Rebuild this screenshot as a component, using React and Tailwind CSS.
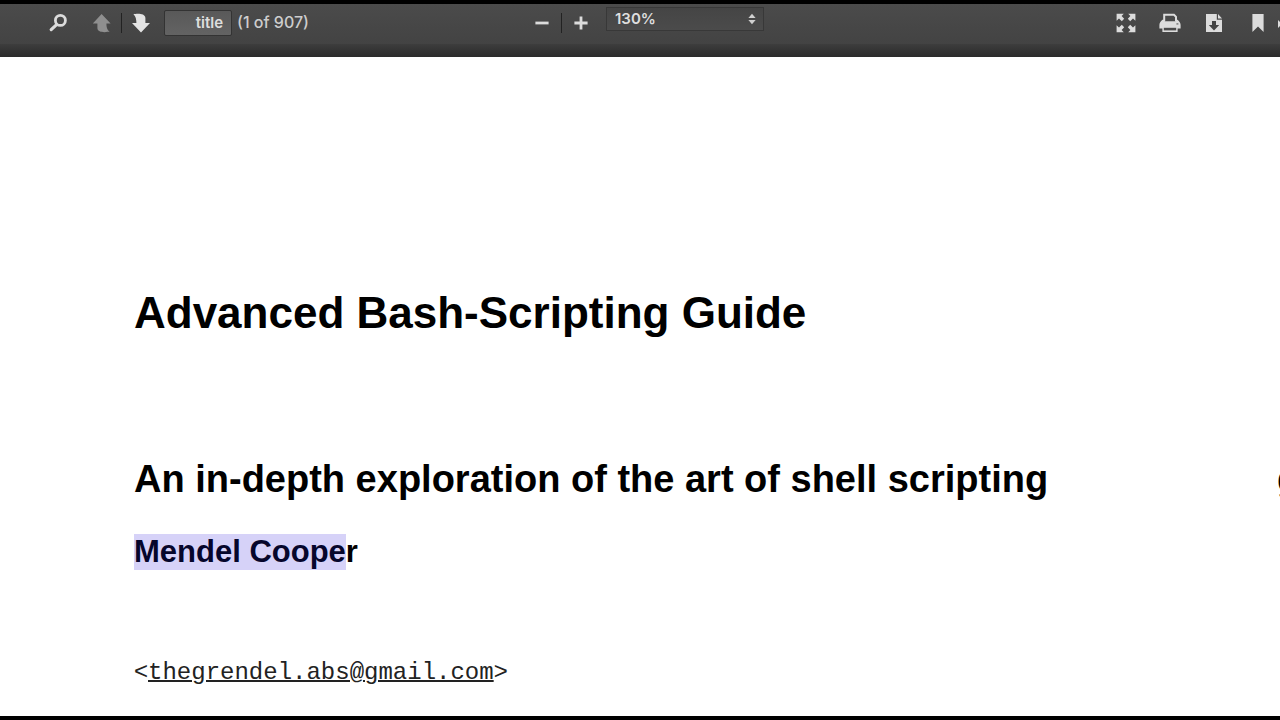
import React, { useState } from 'react';

// Toolbar icons, drawn on a 20x20 grid
const SearchIcon = () => (
  <svg width="20" height="20" viewBox="0 0 20 20" fill="none" stroke="#dcdcdc">
    <circle cx="12.4" cy="7.4" r="5" strokeWidth="2.8" />
    <path d="M8.6 11.6L3.2 16.6" strokeWidth="3.2" strokeLinecap="round" />
  </svg>
);

const UpIcon = () => (
  <svg width="20" height="20" viewBox="0 0 20 20" fill="#8f8f8f">
    <path d="M9.6 1L18.6 10.4H14.4C14.4 14 15 16.8 17.6 18.6C15 19.2 5.4 20.4 5.4 15V10.4H.8Z" />
  </svg>
);

const DownIcon = () => (
  <svg width="20" height="20" viewBox="0 0 20 20" fill="#e4e4e4">
    <path d="M10 19.4L1 10H5.4C5.4 6.4 4.8 3.2 2.4 1.2C5 .6 14.2 -.4 14.4 5V10H19Z" />
  </svg>
);

const FullscreenIcon = () => (
  <svg width="20" height="20" viewBox="0 0 20 20" fill="#dcdcdc">
    <path
      id="corner"
      d="M.6 .8H7.8L5.6 3L8.2 5.8L5.8 8.2L3 5.4L.6 7.8Z"
    />
    <use href="#corner" transform="translate(20 0) scale(-1 1)" />
    <use href="#corner" transform="translate(0 20) scale(1 -1)" />
    <use href="#corner" transform="translate(20 20) scale(-1 -1)" />
  </svg>
);

const PrintIcon = () => (
  <svg width="22" height="20" viewBox="0 0 22 20">
    <path d="M5.2 8V1.8H15L17 3.8V8" fill="#4a4a4a" stroke="#dcdcdc" strokeWidth="2" />
    <path
      d="M3.4 6.8H5.8V8.2H16.4V6.8H18.6C20.4 8.2 21.6 10.2 21.6 12V15.4H18.6V19H3.4V15.4H.4V12C.4 10.2 1.6 8.2 3.4 6.8Z"
      fill="#dcdcdc"
    />
    <path d="M4.8 14.8H17.2V17.4H4.8Z" fill="#4a4a4a" />
    <path d="M17.4 10.2H19.4V11.6H17.4Z" fill="#777" />
  </svg>
);

const DownloadIcon = () => (
  <svg width="20" height="20" viewBox="0 0 20 20">
    <path d="M2 1H12.8V6.8H18V19H2Z" fill="#dcdcdc" />
    <path d="M14 1L18 5.4H14Z" fill="#dcdcdc" />
    <path d="M8 8H12V12H15.2L10 17.4L4.8 12H8Z" fill="#444" />
  </svg>
);

const BookmarkIcon = () => (
  <svg width="20" height="20" viewBox="0 0 20 20" fill="#dcdcdc">
    <path d="M4.4 1H15.6V19L10 13.6L4.4 19Z" />
  </svg>
);

const ToolButton = ({ label, children, disabled }) => (
  <button
    aria-label={label}
    title={label}
    disabled={disabled}
    className="flex h-8 w-8 shrink-0 items-center justify-center"
  >
    {children}
  </button>
);

const Separator = () => <div className="h-5 w-px shrink-0 bg-[#222]" />;

const App = () => {
  const [page, setPage] = useState('title');
  const [zoom, setZoom] = useState('130%');

  return (
    <div className="flex min-h-screen flex-col overflow-hidden border-y-4 border-black bg-white font-['Liberation_Sans',sans-serif] text-black">
      {/* Toolbar */}
      <header className="flex h-10 items-center bg-linear-to-b from-[#4b4b4b] to-[#434343] pb-0.5 font-[Inter,sans-serif] text-[#dedede]">
        <div className="flex flex-1 items-center gap-[3px] pl-[42px]">
          <ToolButton label="Find in document"><SearchIcon /></ToolButton>
          <div className="w-1.5" />
          <ToolButton label="Previous page" disabled><UpIcon /></ToolButton>
          <Separator />
          <ToolButton label="Next page"><DownIcon /></ToolButton>
          <input
            aria-label="Page"
            value={page}
            onChange={(e) => setPage(e.target.value)}
            className="ml-1 h-[26px] w-[68px] rounded-xs border border-[#333] bg-linear-to-b from-[#595959] to-[#636363] px-2 pb-0.5 text-right text-[15px] font-semibold"
          />
          <span className="ml-0.5 pb-0.5 text-base font-medium text-[#cdcdcd]">(1 of 907)</span>
        </div>

        <div className="flex items-center gap-[3px] pr-8">
          <ToolButton label="Zoom out">
            <svg width="20" height="20" viewBox="0 0 20 20"><path d="M3.4 10H16.6" stroke="#dcdcdc" strokeWidth="2.8" /></svg>
          </ToolButton>
          <Separator />
          <ToolButton label="Zoom in">
            <svg width="20" height="20" viewBox="0 0 20 20"><path d="M3.4 10H16.6M10 3.4V16.6" stroke="#dcdcdc" strokeWidth="2.8" /></svg>
          </ToolButton>
          <div className="relative mb-2 ml-1.5">
            <select
              aria-label="Zoom"
              value={zoom}
              onChange={(e) => setZoom(e.target.value)}
              className="block h-6 w-[158px] appearance-none border border-[#383838] bg-linear-to-b from-[#454545] to-[#4b4b4b] px-2 text-[15px] leading-5 font-semibold"
            >
              <option>100%</option>
              <option>130%</option>
              <option>150%</option>
            </select>
            <svg className="pointer-events-none absolute top-1.5 right-2" width="8" height="12" viewBox="0 0 8 12" fill="#d0d0d0">
              <path d="M4 .8L7.6 5H.4Z" />
              <path d="M4 11.2L7.6 7H.4Z" />
            </svg>
          </div>
        </div>

        <div className="flex flex-1 items-center justify-end gap-3">
          <ToolButton label="Presentation mode"><FullscreenIcon /></ToolButton>
          <ToolButton label="Print"><PrintIcon /></ToolButton>
          <ToolButton label="Download"><DownloadIcon /></ToolButton>
          <div className="flex items-center gap-1">
            <ToolButton label="Bookmark"><BookmarkIcon /></ToolButton>
            <svg width="2" height="20" viewBox="0 0 2 20" fill="#dcdcdc"><path d="M0 7L2 9V13L0 15Z" /></svg>
          </div>
        </div>
      </header>
      <div className="h-[13px] bg-linear-to-b from-[#3d3d3d] to-[#2b2b2b]" />

      {/* Document page */}
      <main className="flex-1 pt-[228px] pl-[134px]">
        <h1 className="text-[44px] leading-14 font-bold">Advanced Bash-Scripting Guide</h1>
        <div className="mt-[114px] flex items-center justify-between">
          <h2 className="text-[38px] leading-12 font-bold">An in-depth exploration of the art of shell scripting</h2>
          {/* edge of the neighbouring page */}
          <span className="w-[3px] overflow-hidden text-[38px] leading-12 font-bold">g</span>
        </div>
        <h3 className="mt-[31px] text-[31px] leading-9 font-bold">
          <span className="inline-block bg-[#d6d2f8] text-[#06062c]">Mendel Coope</span>r
        </h3>
        <p className="mt-[83px] text-2xl leading-9 text-[#222]">
          &lt;<a href="mailto:thegrendel.abs@gmail.com" className="font-['Liberation_Mono',monospace] underline decoration-2">thegrendel.abs@gmail.com</a>&gt;
        </p>
      </main>
    </div>
  );
};

export default App;
